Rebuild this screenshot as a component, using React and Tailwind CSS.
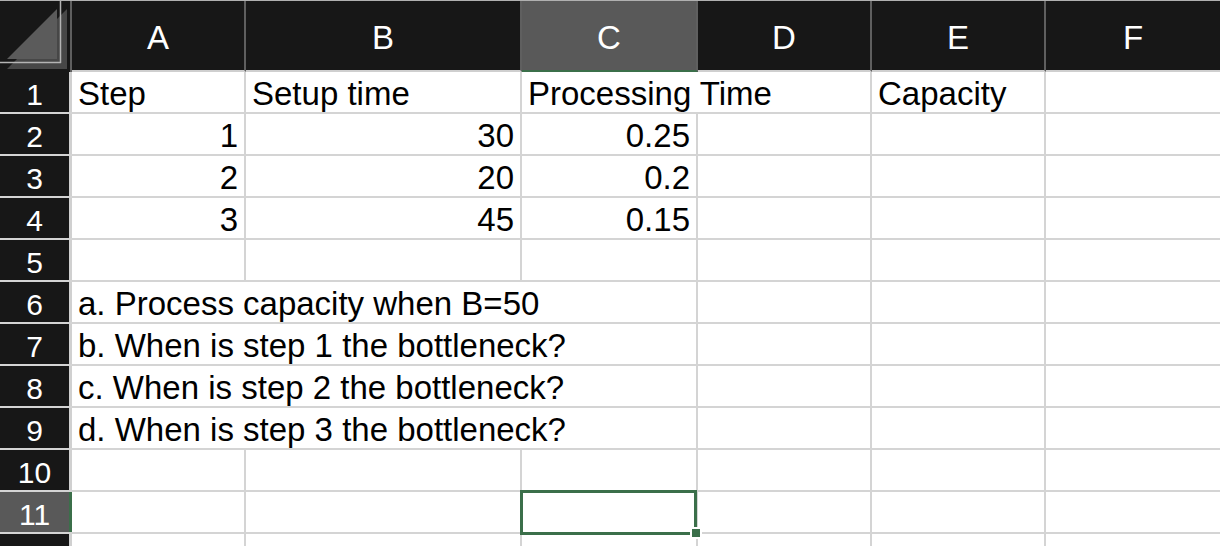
import React from 'react';

// column widths, right border included
const COLS = [
  { key: 'A', w: 'w-[174px]' },
  { key: 'B', w: 'w-[276px]' },
  { key: 'C', w: 'w-[176px]', active: true },
  { key: 'D', w: 'w-[174px]' },
  { key: 'E', w: 'w-[174px]' },
  { key: 'F', w: 'w-[174px]', last: true },
];

const Cell = ({ w, children, right, last, className = '' }) => (
  <div
    className={`${w} h-full shrink-0 flex items-center pt-[4px] overflow-visible whitespace-nowrap border-[#d4d4d4] ${
      last ? '' : 'border-r-2'
    } ${right ? 'justify-end pr-[6px]' : 'justify-start pl-[6px]'} ${className}`}
  >
    {children}
  </div>
);

const RowHead = ({ n, active }) => (
  <div
    className={`w-[72px] h-full shrink-0 flex items-center justify-center text-white text-[30px] pt-[6px] border-r-[3px] ${
      active ? 'bg-[#595959] border-[#3b6f4a]' : 'bg-[#171717] border-[#d0d0d0]'
    }`}
  >
    {n}
  </div>
);

const Row = ({ n, active, children }) => (
  <div className="flex h-[42px] shrink-0 border-b-2 border-[#d4d4d4] bg-white text-black text-[33px]">
    <RowHead n={n} active={active} />
    {children}
  </div>
);

const Corner = () => (
  <div className="w-[72px] h-full shrink-0 bg-[#171717] border-r-2 border-[#5f5f5f]">
    <svg width="70" height="70" viewBox="0 0 70 70">
      <polygon points="7,68 67,68 67,8" fill="#474747" />
      <line x1="60.5" y1="0" x2="60.5" y2="62" stroke="#b4b4b4" strokeWidth="1.5" />
      <line x1="0" y1="61.5" x2="61" y2="61.5" stroke="#b4b4b4" strokeWidth="1.5" />
      <polygon points="7,58 57,58 57,8" fill="#5b5b5b" />
    </svg>
  </div>
);

const Header = () => (
  <div className="flex h-[72px] shrink-0 bg-[#171717] border-t border-[#b0b0b0] text-white text-[33px]">
    <Corner />
    {COLS.map((c) => (
      <div
        key={c.key}
        className={`${c.w} h-full shrink-0 flex items-center justify-center pt-[4px] ${
          c.last ? '' : 'border-r-2 border-[#5f5f5f]'
        } ${c.active ? 'bg-[#595959] border-b-2 border-b-[#3b6f4a]' : 'border-b-2 border-b-[#cfcfcf]'}`}
      >
        {c.key}
      </div>
    ))}
  </div>
);

const EmptyRow = ({ n, active }) => (
  <Row n={n} active={active}>
    {COLS.map((c) => (
      <Cell key={c.key} w={c.w} last={c.last} />
    ))}
  </Row>
);

const NumRow = ({ n, a, b, c }) => (
  <Row n={n}>
    <Cell w="w-[174px]" right>{a}</Cell>
    <Cell w="w-[276px]" right>{b}</Cell>
    <Cell w="w-[176px]" right>{c}</Cell>
    <Cell w="w-[174px]" />
    <Cell w="w-[174px]" />
    <Cell w="w-[174px]" last />
  </Row>
);

const TextRow = ({ n, text }) => (
  <Row n={n}>
    <Cell w="w-[626px]">{text}</Cell>
    <Cell w="w-[174px]" />
    <Cell w="w-[174px]" />
    <Cell w="w-[174px]" last />
  </Row>
);

export default function App() {
  return (
    <div className="w-[1220px] h-[546px] overflow-hidden bg-white flex flex-col font-['Liberation_Sans',Arial,sans-serif] leading-[1.15]">
      <Header />

      <Row n={1}>
        <Cell w="w-[174px]">Step</Cell>
        <Cell w="w-[276px]">Setup time</Cell>
        <Cell w="w-[350px]">Processing Time</Cell>
        <Cell w="w-[174px]">Capacity</Cell>
        <Cell w="w-[174px]" last />
      </Row>
      <NumRow n={2} a="1" b="30" c="0.25" />
      <NumRow n={3} a="2" b="20" c="0.2" />
      <NumRow n={4} a="3" b="45" c="0.15" />
      <EmptyRow n={5} />
      <TextRow n={6} text="a. Process capacity when B=50" />
      <TextRow n={7} text="b. When is step 1 the bottleneck?" />
      <TextRow n={8} text="c. When is step 2 the bottleneck?" />
      <TextRow n={9} text="d. When is step 3 the bottleneck?" />
      <EmptyRow n={10} />

      <Row n={11} active>
        <Cell w="w-[174px]" />
        <Cell w="w-[276px]" />
        <div className="relative w-[176px] h-full shrink-0 border-r-2 border-[#d4d4d4]">
          {/* active cell outline */}
          <div className="absolute -left-[2px] -top-[2px] -right-[1px] -bottom-[3px] border-[3px] border-[#3b6f4a]" />
          <div className="absolute left-[168px] top-[35px] w-[12px] h-[12px] bg-[#3b6f4a] border-2 border-white" />
        </div>
        <Cell w="w-[174px]" />
        <Cell w="w-[174px]" />
        <Cell w="w-[174px]" last />
      </Row>

      <EmptyRow n={12} />
    </div>
  );
}
